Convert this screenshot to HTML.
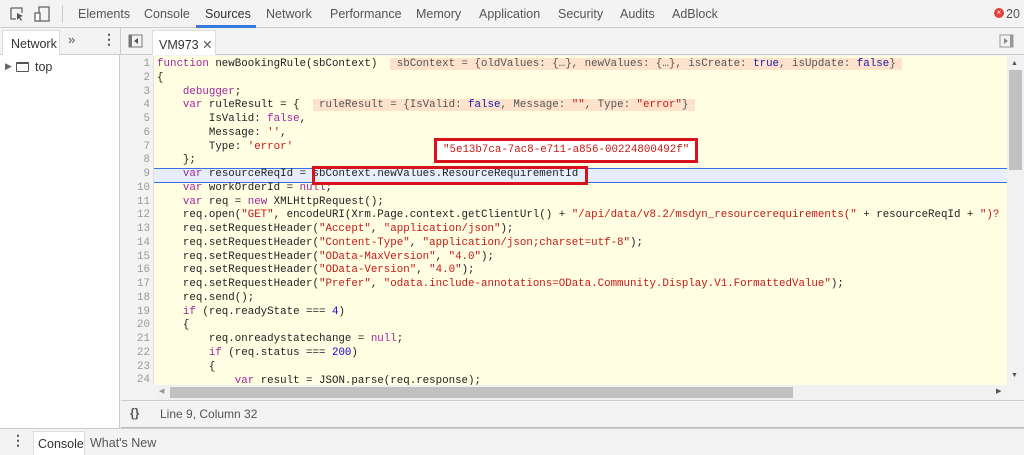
<!DOCTYPE html>
<html><head><meta charset="utf-8"><style>
*{margin:0;padding:0;box-sizing:border-box}
body{width:1024px;height:455px;overflow:hidden;background:#f3f3f3;font-family:"Liberation Sans",sans-serif;font-size:12px;color:#333;position:relative}
.abs{position:absolute}
.top{left:0;top:0;width:1024px;height:28px;background:#f3f3f3;border-bottom:1px solid #ccc}
.tab{position:absolute;top:7px;font-size:12.5px;color:#555}
.bar2{left:0;top:28px;width:1024px;height:27px;background:#f3f3f3;border-bottom:1px solid #ccc}
.left{left:0;top:55px;width:120px;height:373px;background:#fff;border-right:1px solid #ccc}
.code{left:121px;top:56px;width:886px;height:329px;background:#fffde2;overflow:hidden}
.gut{left:121px;top:56px;width:33px;height:329px;background:#f3f3f3;border-right:1px solid #ddd}
.ln{position:absolute;left:0;width:29px;text-align:right;color:#999;font-family:"Liberation Mono",monospace;font-size:10.8px}
.cl{position:absolute;left:157px;white-space:pre;font-family:"Liberation Mono",monospace;font-size:10.8px;color:#222}
.k{color:#a0289a}.s{color:#c41a16}.n{color:#1c00cf}.v{color:#1a1aa6}
.ann{background:#fde3cc;color:#555}
</style></head><body>
<div class="abs top">
<svg class="abs" style="left:9px;top:6px" width="16" height="16"><path d="M2 2h11v5M2 2v11h5" fill="none" stroke="#666" stroke-width="1.3"/><path d="M8 7l6 3-3 1 2 3-1 1-2-3-2 2z" fill="#555"/></svg>
<svg class="abs" style="left:33px;top:5px" width="18" height="18"><rect x="6" y="2" width="10" height="14" fill="none" stroke="#666" stroke-width="1.3"/><rect x="2" y="8" width="5" height="8" fill="#fff" stroke="#666" stroke-width="1.3"/></svg>
<div class="abs" style="left:62px;top:5px;width:1px;height:18px;background:#ccc"></div>
<span class="tab" style="left:78px">Elements</span>
<span class="tab" style="left:144px">Console</span>
<span class="tab" style="left:205px;color:#333">Sources</span>
<div class="abs" style="left:196px;top:25px;width:60px;height:3px;background:#3879d9"></div>
<span class="tab" style="left:266px">Network</span>
<span class="tab" style="left:330px">Performance</span>
<span class="tab" style="left:416px">Memory</span>
<span class="tab" style="left:479px">Application</span>
<span class="tab" style="left:558px">Security</span>
<span class="tab" style="left:620px">Audits</span>
<span class="tab" style="left:672px">AdBlock</span>
<div class="abs" style="left:994px;top:8px;width:10px;height:10px;border-radius:50%;background:#e2403a;color:#fff;font-size:8px;line-height:10px;text-align:center">×</div>
<span class="tab" style="left:1006px">20</span>
</div>
<div class="abs bar2">
<div class="abs" style="left:2px;top:2px;width:58px;height:25px;background:#fff;border:1px solid #ddd;border-bottom:none;padding:6px 0 0 8px;font-size:12.5px">Network</div>
<span class="abs" style="left:68px;top:4px;font-size:13px;color:#555">»</span>
<span class="abs" style="left:102px;top:3px;font-size:14px;color:#555;font-weight:bold">⋮</span>
<div class="abs" style="left:120px;top:0;width:1px;height:27px;background:#ccc"></div>
<svg class="abs" style="left:128px;top:6px" width="16" height="14"><rect x="1" y="1" width="13" height="12" fill="none" stroke="#777"/><rect x="1" y="1" width="3" height="12" fill="#777"/><path d="M10 4v6l-4-3z" fill="#555"/></svg>
<div class="abs" style="left:152px;top:2px;width:64px;height:25px;background:#fff;border:1px solid #ddd;border-bottom:none;padding:6px 0 0 6px;font-size:12.5px">VM973 <span style="color:#555">✕</span></div>
<svg class="abs" style="left:999px;top:6px" width="16" height="14"><rect x="1" y="1" width="13" height="12" fill="none" stroke="#999"/><rect x="11" y="1" width="3" height="12" fill="#999"/><path d="M5 4v6l4-3z" fill="#888"/></svg>
</div>
<div class="abs left">
<span class="abs" style="left:5px;top:6px;font-size:9px;color:#666">▶</span>
<div class="abs" style="left:16px;top:7px;width:13px;height:10px;border:1.5px solid #555;border-top-width:2.5px;border-radius:1px"></div>
<span class="abs" style="left:35px;top:5px;font-size:12.5px">top</span>
</div>
<div class="abs code"></div>
<div class="abs gut"></div>
<div class="abs" style="left:154px;top:168px;width:853px;height:15px;background:#e6eefc;border:1px solid #3b6ee0;border-left:none;border-right:none"></div>
<div id="lines"></div>
<div class="abs" style="left:122px;top:57px">
</div>
<div class="abs" style="left:121px;top:56px">
<div class="ln" style="top:2px">1</div><div class="ln" style="top:16px">2</div><div class="ln" style="top:30px">3</div><div class="ln" style="top:43px">4</div><div class="ln" style="top:57px">5</div><div class="ln" style="top:71px">6</div><div class="ln" style="top:85px">7</div><div class="ln" style="top:98px">8</div><div class="ln" style="top:112px">9</div><div class="ln" style="top:126px">10</div><div class="ln" style="top:140px">11</div><div class="ln" style="top:153px">12</div><div class="ln" style="top:167px">13</div><div class="ln" style="top:181px">14</div><div class="ln" style="top:195px">15</div><div class="ln" style="top:208px">16</div><div class="ln" style="top:222px">17</div><div class="ln" style="top:236px">18</div><div class="ln" style="top:250px">19</div><div class="ln" style="top:263px">20</div><div class="ln" style="top:277px">21</div><div class="ln" style="top:291px">22</div><div class="ln" style="top:305px">23</div><div class="ln" style="top:318px">24</div>
</div>
<div class="cl" style="top:58px"><span class="k">function</span> newBookingRule(sbContext)  <span class="ann"> sbContext = {oldValues: {…}, newValues: {…}, isCreate: <span class="v">true</span>, isUpdate: <span class="v">false</span>} </span></div>
<div class="cl" style="top:72px">{</div>
<div class="cl" style="top:86px">    <span class="k">debugger</span>;</div>
<div class="cl" style="top:99px">    <span class="k">var</span> ruleResult = {  <span class="ann"> ruleResult = {IsValid: <span class="v">false</span>, Message: <span class="s">""</span>, Type: <span class="s">"error"</span>} </span></div>
<div class="cl" style="top:113px">        IsValid: <span class="k">false</span>,</div>
<div class="cl" style="top:127px">        Message: <span class="s">''</span>,</div>
<div class="cl" style="top:141px">        Type: <span class="s">'error'</span></div>
<div class="cl" style="top:154px">    };</div>
<div class="cl" style="top:168px">    <span class="k">var</span> resourceReqId = sbContext.newValues.ResourceRequirementId</div>
<div class="cl" style="top:182px">    <span class="k">var</span> workOrderId = <span class="k">null</span>;</div>
<div class="cl" style="top:196px">    <span class="k">var</span> req = <span class="k">new</span> XMLHttpRequest();</div>
<div class="cl" style="top:209px">    req.open(<span class="s">"GET"</span>, encodeURI(Xrm.Page.context.getClientUrl() + <span class="s">"/api/data/v8.2/msdyn_resourcerequirements("</span> + resourceReqId + <span class="s">")?</span></div>
<div class="cl" style="top:223px">    req.setRequestHeader(<span class="s">"Accept"</span>, <span class="s">"application/json"</span>);</div>
<div class="cl" style="top:237px">    req.setRequestHeader(<span class="s">"Content-Type"</span>, <span class="s">"application/json;charset=utf-8"</span>);</div>
<div class="cl" style="top:251px">    req.setRequestHeader(<span class="s">"OData-MaxVersion"</span>, <span class="s">"4.0"</span>);</div>
<div class="cl" style="top:264px">    req.setRequestHeader(<span class="s">"OData-Version"</span>, <span class="s">"4.0"</span>);</div>
<div class="cl" style="top:278px">    req.setRequestHeader(<span class="s">"Prefer"</span>, <span class="s">"odata.include-annotations=OData.Community.Display.V1.FormattedValue"</span>);</div>
<div class="cl" style="top:292px">    req.send();</div>
<div class="cl" style="top:306px">    <span class="k">if</span> (req.readyState === <span class="n">4</span>)</div>
<div class="cl" style="top:319px">    {</div>
<div class="cl" style="top:333px">        req.onreadystatechange = <span class="k">null</span>;</div>
<div class="cl" style="top:347px">        <span class="k">if</span> (req.status === <span class="n">200</span>)</div>
<div class="cl" style="top:361px">        {</div>
<div class="cl" style="top:375px">            <span class="k">var</span> result = JSON.parse(req.response);</div>
<!-- popup and red boxes -->
<div class="abs" style="left:434px;top:138px;width:264px;height:25px;background:#fff;border:3px solid #d8111a"></div>
<div class="cl" style="left:443px;top:144px;color:#c41a16">"5e13b7ca-7ac8-e711-a856-00224800492f"</div>
<div class="abs" style="left:312px;top:166px;width:276px;height:19px;border:3px solid #d8111a"></div>
<!-- vertical scrollbar -->
<div class="abs" style="left:1007px;top:56px;width:17px;height:329px;background:#f1f1f1"></div>
<div class="abs" style="left:1009px;top:70px;width:13px;height:100px;background:#c1c1c1"></div>
<span class="abs" style="left:1011px;top:60px;font-size:7px;color:#555">▲</span>
<span class="abs" style="left:1011px;top:372px;font-size:7px;color:#555">▼</span>
<!-- horizontal scrollbar -->
<div class="abs" style="left:154px;top:385px;width:853px;height:15px;background:#f1f1f1"></div>
<div class="abs" style="left:170px;top:387px;width:623px;height:11px;background:#c1c1c1"></div>
<span class="abs" style="left:159px;top:387px;font-size:7px;color:#999">◀</span>
<span class="abs" style="left:996px;top:387px;font-size:7px;color:#555">▶</span>
<div class="abs" style="left:121px;top:383px;width:33px;height:17px;background:#f3f3f3"></div>
<!-- status -->
<div class="abs" style="left:121px;top:400px;width:903px;height:28px;background:#f3f3f3;border-top:1px solid #ccc;border-bottom:1px solid #bbb"></div>
<span class="abs" style="left:130px;top:406px;font-size:12px;font-weight:bold;color:#555">{}</span>
<span class="abs" style="left:160px;top:407px;font-size:12px;color:#555">Line 9, Column 32</span>
<!-- drawer -->
<div class="abs" style="left:0;top:428px;width:1024px;height:27px;background:#f3f3f3;border-top:1px solid #ccc"></div>
<span class="abs" style="left:11px;top:432px;font-size:14px;color:#555;font-weight:bold">⋮</span>
<div class="abs" style="left:33px;top:431px;width:52px;height:24px;background:#fff;border:1px solid #ddd;border-bottom:none;padding:5px 0 0 4px;font-size:12.5px">Console</div>
<span class="abs" style="left:90px;top:436px;font-size:12.5px;color:#555">What's New</span>
</body></html>
